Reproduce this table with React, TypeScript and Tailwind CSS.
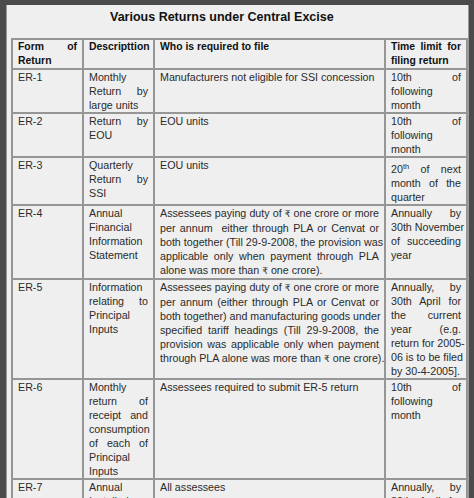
import React from "react";

type Line = React.ReactNode;

// the rupee sign comes from a wider fallback font, so keep it a little smaller
const R = () => <span className="text-[9px]">{"\u20b9"}</span>;

const rows: { form: string; desc: Line[]; who: Line[]; time: Line[]; timeFirstPad?: boolean }[] = [
  {
    form: "ER-1",
    desc: ["Monthly", "Return by", "large units"],
    who: ["Manufacturers not eligible for SSI concession"],
    time: ["10th of", "following", "month"],
  },
  {
    form: "ER-2",
    desc: ["Return by", "EOU"],
    who: ["EOU units"],
    time: ["10th of", "following", "month"],
  },
  {
    form: "ER-3",
    desc: ["Quarterly", "Return by", "SSI"],
    who: ["EOU units"],
    time: [
      <>
        20<sup className="text-[7.5px]">th</sup> of next
      </>,
      "month of the",
      "quarter",
    ],
    timeFirstPad: true,
  },
  {
    form: "ER-4",
    desc: ["Annual", "Financial", "Information", "Statement"],
    who: [
      <>Assessees paying duty of <R /> one crore or more</>,
      "per annum  either through PLA or Cenvat or",
      "both together (Till 29-9-2008, the provision was",
      "applicable only when payment through PLA",
      <>alone was more than <R /> one crore).</>,
    ],
    time: ["Annually by", "30th November", "of succeeding", "year"],
  },
  {
    form: "ER-5",
    desc: ["Information", "relating to", "Principal", "Inputs"],
    who: [
      <>Assessees paying duty of <R /> one crore or more</>,
      "per annum (either through PLA or Cenvat or",
      "both together) and manufacturing goods under",
      "specified tariff headings (Till 29-9-2008, the",
      "provision was applicable only when payment",
      <>through PLA alone was more than <R /> one crore).</>,
    ],
    time: [
      "Annually, by",
      "30th April for",
      "the current",
      "year (e.g.",
      "return for 2005-",
      "06 is to be filed",
      "by 30-4-2005].",
    ],
  },
  {
    form: "ER-6",
    desc: ["Monthly", "return of", "receipt and", "consumption", "of each of", "Principal", "Inputs"],
    who: ["Assessees required to submit ER-5 return"],
    time: ["10th of", "following", "month"],
  },
  {
    form: "ER-7",
    desc: ["Annual", "Installed", "Capacity", "Statement"],
    who: ["All assessees"],
    time: ["Annually, by", "30th April for", "the current", "year"],
  },
];

// each line is its own block so the wrap matches; all but the last are justified
function Lines({ lines, firstPad }: { lines: Line[]; firstPad?: boolean }) {
  return (
    <>
      {lines.map((l, i) => (
        <div
          key={i}
          className={
            (i < lines.length - 1 ? "text-justify [text-align-last:justify] " : "") +
            (i === 0 && firstPad ? "pt-[4px] " : "") +
            "whitespace-pre"
          }
        >
          {l}
        </div>
      ))}
    </>
  );
}

const cell = "border-2 border-[#969696] align-top px-[5px] py-0";

export default function App() {
  return (
    <div
      className="h-[498px] w-[474px] overflow-hidden bg-[#4b4b4b] pt-[5px] pl-[6px] pr-[5px]"
      style={{ fontFamily: '"Liberation Sans", Arial, "DejaVu Sans", sans-serif' }}
    >
      <div className="h-full border-l border-r border-[#9a9a9a] bg-[#efefef]">
        {/* Title */}
        <h1 className="pl-[103px] pt-[5px] text-[12.5px] font-bold leading-[15px] text-[#111]">
          Various Returns under Central Excise
        </h1>

        {/* Returns table */}
        <table className="mt-[13px] ml-[4px] w-[455px] table-fixed border-collapse text-[10.7px] leading-[14px] text-[#2b2b2b]">
          <colgroup>
            <col className="w-[71px]" />
            <col className="w-[71px]" />
            <col className="w-[231px]" />
            <col className="w-[82px]" />
          </colgroup>
          <thead>
            <tr className="text-[10.4px] font-bold text-[#111]">
              <th className={cell + " text-left font-bold"}>
                <Lines lines={["Form of", "Return"]} />
              </th>
              <th className={cell + " text-left font-bold"}>
                <Lines lines={["Descripttion"]} />
              </th>
              <th className={cell + " text-left font-bold"}>
                <Lines lines={["Who is required to file"]} />
              </th>
              <th className={cell + " text-left font-bold"}>
                <Lines lines={["Time limit for", "filing return"]} />
              </th>
            </tr>
          </thead>
          <tbody>
            {rows.map((r) => (
              <tr key={r.form}>
                <td className={cell}>
                  <Lines lines={[r.form]} />
                </td>
                <td className={cell}>
                  <Lines lines={r.desc} />
                </td>
                <td className={cell}>
                  <Lines lines={r.who} />
                </td>
                <td className={cell}>
                  <Lines lines={r.time} firstPad={r.timeFirstPad} />
                </td>
              </tr>
            ))}
          </tbody>
        </table>
      </div>
    </div>
  );
}
